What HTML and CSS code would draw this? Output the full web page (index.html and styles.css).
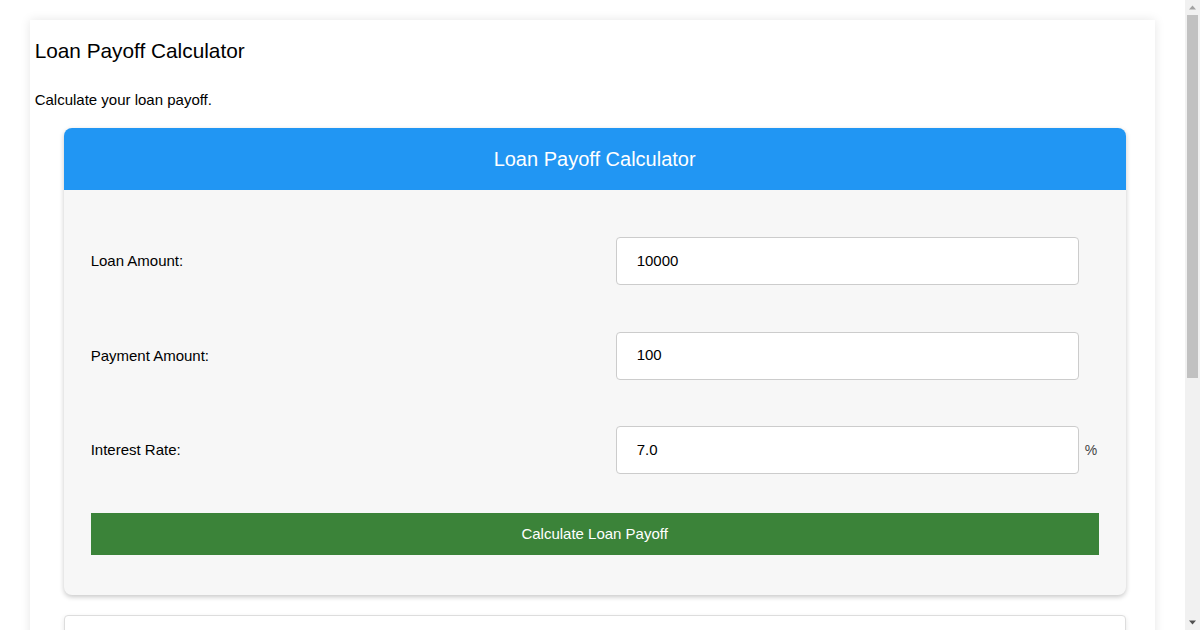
FILE: index.html
```html
<!DOCTYPE html>
<html lang="en">
<head>
<meta charset="utf-8">
<title>Loan Payoff Calculator</title>
<link rel="stylesheet" href="styles.css">
</head>
<body>
<div class="viewport">
  <div class="page">
    <h2 class="page-title">Loan Payoff Calculator</h2>
    <p class="intro">Calculate your loan payoff.</p>
    <div class="calc">
      <div class="calc-head">Loan Payoff Calculator</div>
      <div class="calc-body">
        <div class="row">
          <label class="label" for="amt">Loan Amount:</label>
          <input class="field" id="amt" type="text" value="10000">
          <span class="unit"></span>
        </div>
        <div class="row">
          <label class="label" for="pay">Payment Amount:</label>
          <input class="field" id="pay" type="text" value="100">
          <span class="unit"></span>
        </div>
        <div class="row">
          <label class="label" for="rate">Interest Rate:</label>
          <input class="field" id="rate" type="text" value="7.0">
          <span class="unit">%</span>
        </div>
        <button class="calc-btn" type="button">Calculate Loan Payoff</button>
      </div>
    </div>
    <div class="result"></div>
  </div>
</div>
<div class="scrollbar">
  <div class="sb-btn"><svg width="15" height="15" viewBox="0 0 15 15"><polygon points="4,9.5 11,9.5 7.5,5.5" fill="#a3a3a3"/></svg></div>
  <div class="sb-track"><div class="sb-thumb"></div></div>
  <div class="sb-btn"><svg width="15" height="15" viewBox="0 0 15 15"><polygon points="4,5.5 11,5.5 7.5,9.5" fill="#505050"/></svg></div>
</div>
</body>
</html>
```

FILE: styles.css
```css
html, body {
  margin: 0;
  padding: 0;
  background: #ffffff;
  font-family: "Liberation Sans", Arial, sans-serif;
  color: #000;
}

body {
  display: flex;
  height: 630px;
  overflow: hidden;
}

.viewport {
  flex: 1;
  height: 630px;
  overflow: hidden;
}

.scrollbar {
  width: 15px;
  height: 630px;
  background: #f1f1f1;
  display: flex;
  flex-direction: column;
}

.sb-btn {
  height: 15px;
  display: flex;
}

.sb-track {
  flex: 1;
}

.sb-thumb {
  height: 363px;
  margin: 0 2px 0 2px;
  background: #c1c1c1;
}

.page {
  width: 95%;
  margin: 20px auto;
  padding: 5px 5px 20px 5px;
  box-sizing: border-box;
  background: #fff;
  box-shadow: 0 0 10px rgba(0, 0, 0, 0.1);
}

.page-title {
  font-size: 20.8px;
  font-weight: normal;
  margin: 14px 0 0 0;
  line-height: 24px;
}

.intro {
  font-size: 15px;
  margin: 28px 0 0 0;
  line-height: 18px;
}

.calc {
  width: 1062px;
  margin: 19px 0 0 29px;
  border-radius: 8px;
  background: #f7f7f7;
  box-shadow: 0 2px 5px rgba(0, 0, 0, 0.22);
  overflow: hidden;
}

.calc-head {
  background: #2196f3;
  color: #fff;
  height: 62px;
  line-height: 62px;
  text-align: center;
  font-size: 20px;
}

.calc-body {
  padding: 23.5px 27px 40px 27px;
}

.row {
  display: grid;
  grid-template-columns: 525px 463px 1fr;
  align-items: center;
  padding: 23.25px 0;
}

.row:first-child {
  padding-top: 23.5px;
}

.label {
  font-size: 15px;
  line-height: 18px;
}

.field {
  box-sizing: border-box;
  height: 48px;
  width: 463px;
  border: 1px solid #cccccc;
  border-radius: 4px;
  padding: 0 20px 2px 20px;
  font-family: "Liberation Sans", Arial, sans-serif;
  font-size: 15px;
  color: #000;
  background: #fff;
  margin: 0;
}

.unit {
  font-size: 14px;
  line-height: 18px;
  color: #444;
  padding-left: 6px;
}

.calc-btn {
  display: block;
  width: 100%;
  height: 42px;
  margin-top: 15.5px;
  border: none;
  background: #3b8339;
  color: #fff;
  font-family: "Liberation Sans", Arial, sans-serif;
  font-size: 15px;
  cursor: pointer;
}

.result {
  width: 1062px;
  height: 300px;
  margin: 20px 0 0 29px;
  box-sizing: border-box;
  background: #fff;
  border: 1px solid #dddddd;
  border-radius: 4px;
  box-shadow: 0 2px 5px rgba(0, 0, 0, 0.1);
}
```
